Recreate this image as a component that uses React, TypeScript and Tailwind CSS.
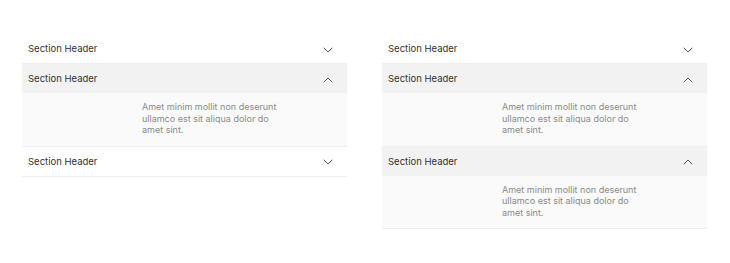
import React from 'react';

type Item = { title: string; body?: string };

const BODY = 'Amet minim mollit non deserunt ullamco est sit aliqua dolor do amet sint.';

const Chevron = ({ up }: { up?: boolean }) => (
  <svg width="12" height="12" viewBox="0 0 12 12" fill="none" className="text-[#555]">
    {up ? (
      <path d="M2 8 L6 4 L10 8" stroke="currentColor" strokeWidth="1" strokeLinecap="round" strokeLinejoin="round" />
    ) : (
      <path d="M2 4 L6 8 L10 4" stroke="currentColor" strokeWidth="1" strokeLinecap="round" strokeLinejoin="round" />
    )}
  </svg>
);

const AccordionRow: React.FC<{ item: Item }> = ({ item }) => {
  const open = !!item.body;
  return (
    <div className="border-b border-[#efefef]">
      <div
        className={`flex h-[29px] items-center justify-between pl-[6px] pr-[13px] pt-[2px] ${
          open ? 'bg-[#f2f2f2]' : 'bg-white'
        }`}
      >
        <span className="text-[9.5px] text-[#333]">{item.title}</span>
        <Chevron up={open} />
      </div>
      {open && (
        <div className="bg-[#fafafa] pl-[120px] pt-[8px] pb-[10px]">
          <p className="w-[135px] text-[9px] leading-[11.5px] text-[#8a8a8a]">{item.body}</p>
        </div>
      )}
    </div>
  );
};

const Accordion: React.FC<{ items: Item[] }> = ({ items }) => (
  <div className="w-[325px]">
    {items.map((it, i) => (
      <AccordionRow key={i} item={it} />
    ))}
  </div>
);

export default function App() {
  return (
    <div
      className="flex h-[263px] w-[730px] items-start gap-[35px] bg-white pl-[22px] pt-[34px]"
      style={{ fontFamily: 'Inter, "Noto Sans", sans-serif' }}
    >
      <Accordion
        items={[
          { title: 'Section Header' },
          { title: 'Section Header', body: BODY },
          { title: 'Section Header' },
        ]}
      />
      <Accordion
        items={[
          { title: 'Section Header' },
          { title: 'Section Header', body: BODY },
          { title: 'Section Header', body: BODY },
        ]}
      />
    </div>
  );
}
